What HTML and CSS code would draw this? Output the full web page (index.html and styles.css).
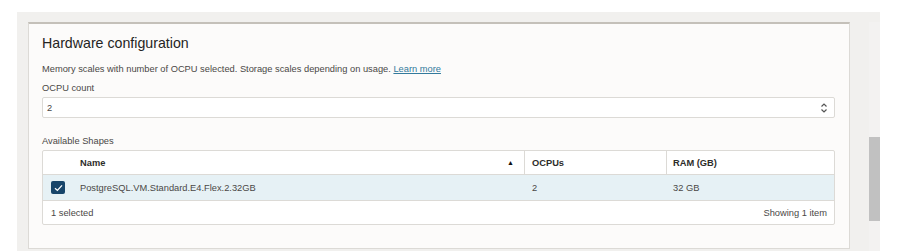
FILE: index.html
```html
<!DOCTYPE html>
<html lang="en">
<head>
    <meta charset="UTF-8">
    <meta name="viewport" content="width=device-width, initial-scale=1.0">
    <title>Hardware configuration</title>
    <link rel="stylesheet" href="styles.css">
</head>
<body>
    <div class="panel">
        <section class="card">
            <h2>Hardware configuration</h2>
            <p class="help">Memory scales with number of OCPU selected. Storage scales depending on usage. <a href="#">Learn more</a></p>

            <label class="field-label" for="ocpu">OCPU count</label>
            <div class="number-input">
                <span id="ocpu">2</span>
                <svg class="spinner" width="8" height="12" viewBox="0 0 8 12">
                    <path d="M1.5 4.5 L4 2 L6.5 4.5" fill="none" stroke="#555" stroke-width="1.2"/>
                    <path d="M1.5 7.5 L4 10 L6.5 7.5" fill="none" stroke="#555" stroke-width="1.2"/>
                </svg>
            </div>

            <div class="field-label shapes-label">Available Shapes</div>
            <div class="table">
                <div class="row head">
                    <div class="cell check"></div>
                    <div class="cell name">Name <span class="sort">&#9650;</span></div>
                    <div class="cell ocpus">OCPUs</div>
                    <div class="cell ram">RAM (GB)</div>
                </div>
                <div class="row selected">
                    <div class="cell check">
                        <span class="checkbox">
                            <svg width="9" height="8" viewBox="0 0 9 8">
                                <path d="M1 4.2 L3.4 6.4 L8 1.4" fill="none" stroke="#fff" stroke-width="1.3"/>
                            </svg>
                        </span>
                    </div>
                    <div class="cell name">PostgreSQL.VM.Standard.E4.Flex.2.32GB</div>
                    <div class="cell ocpus">2</div>
                    <div class="cell ram">32 GB</div>
                </div>
                <div class="table-footer">
                    <span>1 selected</span>
                    <span>Showing 1 item</span>
                </div>
            </div>
        </section>
        <div class="scroll-track">
            <div class="scroll-thumb"></div>
        </div>
    </div>
</body>
</html>
```

FILE: styles.css
```css
:root {
    --panel-bg: #f1f0ee;
    --card-bg: #fcfbfa;
    --border-color: #dcdad6;
    --text-color: #4a4846;
    --heading-color: #252423;
    --link-color: #337a9c;
    --selected-bg: #e6f1f5;
    --check-color: #17456a;
}

* {
    box-sizing: border-box;
    margin: 0;
    padding: 0;
}

body {
    font-family: 'Liberation Sans', Arial, sans-serif;
    color: var(--text-color);
    background-color: #fff;
    height: 251px;
    overflow: hidden;
}

.panel {
    display: flex;
    margin: 12px 23px 0 17px;
    padding: 10px 0 0 11px;
    height: 239px;
    background-color: var(--panel-bg);
}

.card {
    width: 822px;
    height: 227px;
    flex-shrink: 0;
    padding: 9px 14px 0 13px;
    background-color: var(--card-bg);
    border: 1px solid var(--border-color);
    border-top: 2px solid #c4c0b9;
}

h2 {
    font-size: 14.2px;
    font-weight: 400;
    color: var(--heading-color);
    line-height: 20px;
    margin-bottom: 9px;
}

.help {
    font-size: 9.3px;
    line-height: 14px;
    margin-bottom: 5px;
}

.help a {
    color: var(--link-color);
}

.field-label {
    display: block;
    font-size: 9.3px;
    line-height: 14px;
    margin-bottom: 2px;
}

.number-input {
    display: flex;
    align-items: center;
    justify-content: space-between;
    height: 21px;
    padding: 0 6px 0 4px;
    font-size: 9.3px;
    background-color: #fff;
    border: 1px solid var(--border-color);
    border-radius: 2px;
}

.shapes-label {
    margin-top: 16px;
    margin-bottom: 2px;
}

.table {
    border: 1px solid var(--border-color);
    border-radius: 2px;
    background-color: #fff;
    font-size: 9.3px;
}

.row {
    display: flex;
    align-items: center;
    border-bottom: 1px solid var(--border-color);
}

.head {
    height: 24px;
    font-weight: 700;
    color: #2d2c2a;
}

.selected {
    height: 26px;
    background-color: var(--selected-bg);
}

.cell {
    height: 100%;
    display: flex;
    align-items: center;
}

.check {
    width: 37px;
    padding-left: 8px;
}

.name {
    width: 445px;
    justify-content: space-between;
    padding-right: 10px;
}

.head .name,
.head .ocpus {
    border-right: 1px solid var(--border-color);
}

.ocpus {
    width: 142px;
    padding-left: 7px;
}

.ram {
    flex: 1;
    padding-left: 6px;
}

.sort {
    font-size: 7px;
    color: #111;
}

.checkbox {
    display: flex;
    align-items: center;
    justify-content: center;
    width: 14px;
    height: 13px;
    border-radius: 2px;
    background-color: var(--check-color);
}

.table-footer {
    display: flex;
    align-items: center;
    justify-content: space-between;
    height: 23px;
    padding: 0 7px 0 8px;
}

.scroll-track {
    width: 11px;
    margin-left: 19px;
    background-color: #f3f2f1;
}

.scroll-thumb {
    height: 84px;
    margin-top: 115px;
    background-color: #c1c1c1;
}
```
